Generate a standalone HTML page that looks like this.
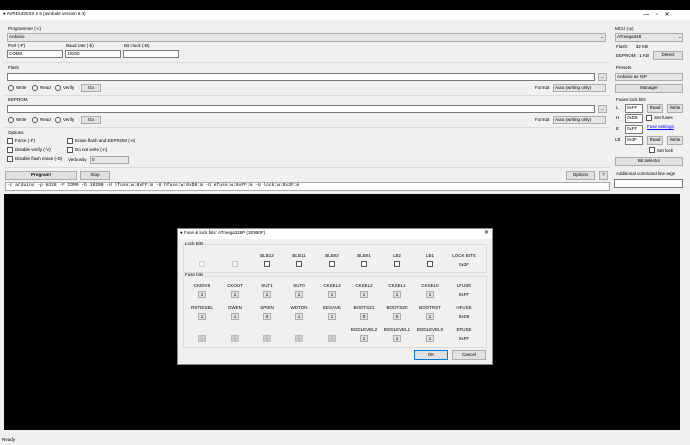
<!DOCTYPE html><html><head><style>
*{margin:0;padding:0;box-sizing:border-box}
body{width:690px;height:445px;background:#000;position:relative;overflow:hidden;font-family:"Liberation Sans",sans-serif;font-size:4.5px;color:#000}
.a{position:absolute;white-space:nowrap;line-height:1}
.tb{position:absolute;background:#fff;border:1px solid #7a7a7a}
.cb{position:absolute;background:#e5e5e5;border:1px solid #acacac}
.bt{position:absolute;background:#e1e1e1;border:1px solid #adadad;text-align:center;line-height:6px;font-size:4.5px}
.ck{position:absolute;width:6px;height:6px;background:#fff;border:1px solid #555}
.rd{position:absolute;width:6px;height:6px;border-radius:50%;background:#fff;border:1px solid #555}
.gl{position:absolute;border-top:1px solid #dcdcdc}
.fb{position:absolute;width:8px;height:7px;border:1px solid #adadad;background:#e1e1e1;text-align:center;font-size:4.5px;line-height:5px}
.dis{color:#aaa;background:#ccc;border-color:#bfbfbf}
.c{text-align:center;width:30px;margin-left:-15px}
</style></head><body>
<div class="a" style="left:0;top:10px;width:690px;height:10px;background:#fff"></div>
<div class="a" style="left:3px;top:12px">● AVRDUDESS 2.6 (avrdude version 6.3)</div>
<div class="a" style="left:643px;top:12px;font-size:6px">—&nbsp;&nbsp;&nbsp;&nbsp;▫&nbsp;&nbsp;&nbsp;&nbsp;✕</div>
<div class="a" style="left:0;top:20px;width:690px;height:174px;background:#f0f0f0"></div>
<div class="a" style="left:0;top:194px;width:4px;height:243px;background:#f0f0f0"></div>
<div class="a" style="left:680px;top:194px;width:10px;height:243px;background:#f0f0f0"></div>
<div class="a" style="left:0;top:430px;width:690px;height:15px;background:#f0f0f0"></div>
<div class="a" style="left:2px;top:438px">Ready</div>

<div class="a" style="left:8px;top:27px">Programmer (-c)</div>
<div class="cb" style="left:7px;top:33px;width:599px;height:9px"></div>
<div class="a" style="left:9px;top:35px">Arduino</div><div class="a" style="left:600px;top:35px">⌄</div>
<div class="a" style="left:8px;top:44px">Port (-P)</div><div class="a" style="left:66px;top:44px">Baud rate (-b)</div><div class="a" style="left:124px;top:44px">Bit clock (-B)</div>
<div class="tb" style="left:7px;top:50px;width:56px;height:8px"></div><div class="a" style="left:9px;top:52px">COM9</div>
<div class="tb" style="left:65px;top:50px;width:56px;height:8px"></div><div class="a" style="left:67px;top:52px">19200</div>
<div class="tb" style="left:123px;top:50px;width:56px;height:8px"></div>
<div class="gl" style="left:5px;top:62px;width:605px"></div>
<div class="a" style="left:8px;top:66px">Flash</div>
<div class="tb" style="left:7px;top:73px;width:588px;height:8px"></div>
<div class="bt" style="left:598px;top:73px;width:9px;height:8px">...</div>
<div class="rd" style="left:8px;top:85px"></div><div class="a" style="left:16px;top:86px">Write</div>
<div class="rd" style="left:32px;top:85px"></div><div class="a" style="left:40px;top:86px">Read</div>
<div class="rd" style="left:55px;top:85px"></div><div class="a" style="left:63px;top:86px">Verify</div>
<div class="bt" style="left:81px;top:84px;width:20px;height:8px">Go</div>
<div class="a" style="left:535px;top:86px">Format</div>
<div class="cb" style="left:553px;top:84px;width:53px;height:8px"></div><div class="a" style="left:555px;top:86px">Auto (writing only)</div>
<div class="gl" style="left:5px;top:95px;width:605px"></div>
<div class="a" style="left:8px;top:98px">EEPROM</div>
<div class="tb" style="left:7px;top:105px;width:588px;height:8px"></div>
<div class="bt" style="left:598px;top:105px;width:9px;height:8px">...</div>
<div class="rd" style="left:8px;top:117px"></div><div class="a" style="left:16px;top:118px">Write</div>
<div class="rd" style="left:32px;top:117px"></div><div class="a" style="left:40px;top:118px">Read</div>
<div class="rd" style="left:55px;top:117px"></div><div class="a" style="left:63px;top:118px">Verify</div>
<div class="bt" style="left:81px;top:116px;width:20px;height:8px">Go</div>
<div class="a" style="left:535px;top:118px">Format</div>
<div class="cb" style="left:553px;top:116px;width:53px;height:8px"></div><div class="a" style="left:555px;top:118px">Auto (writing only)</div>
<div class="gl" style="left:5px;top:127px;width:605px"></div>
<div class="a" style="left:8px;top:131px">Options</div>
<div class="ck" style="left:7px;top:138px"></div><div class="a" style="left:15px;top:139px">Force (-F)</div>
<div class="ck" style="left:7px;top:147px"></div><div class="a" style="left:15px;top:148px">Disable verify (-V)</div>
<div class="ck" style="left:7px;top:156px"></div><div class="a" style="left:15px;top:157px">Disable flash erase (-D)</div>
<div class="ck" style="left:67px;top:138px"></div><div class="a" style="left:75px;top:139px">Erase flash and EEPROM (-e)</div>
<div class="ck" style="left:67px;top:147px"></div><div class="a" style="left:75px;top:148px">Do not write (-n)</div>
<div class="a" style="left:68px;top:158px">Verbosity</div>
<div class="cb" style="left:90px;top:156px;width:39px;height:8px"></div><div class="a" style="left:92px;top:158px">0</div>
<div class="gl" style="left:5px;top:167px;width:605px"></div>
<div class="bt" style="left:5px;top:171px;width:72px;height:9px;font-weight:bold">Program!</div>
<div class="bt" style="left:80px;top:171px;width:30px;height:9px">Stop</div>
<div class="bt" style="left:566px;top:171px;width:29px;height:9px">Options</div>
<div class="bt" style="left:599px;top:171px;width:9px;height:9px">?</div>
<div class="tb" style="left:5px;top:182px;width:605px;height:9px;border-color:#aaa"></div>
<div class="a" style="left:7px;top:184px;font-family:'Liberation Mono',monospace;font-size:4.6px">-c arduino -p m328 -F COM9 -b 19200 -U lfuse:w:0xFF:m -U hfuse:w:0xD9:m -U efuse:w:0xFF:m -U lock:w:0x3F:m</div>

<div class="a" style="left:615px;top:27px">MCU (-p)</div>
<div class="cb" style="left:615px;top:33px;width:68px;height:9px"></div><div class="a" style="left:617px;top:35px">ATmega328</div><div class="a" style="left:678px;top:35px">⌄</div>
<div class="a" style="left:616px;top:45px">Flash:&nbsp;&nbsp;&nbsp;&nbsp;&nbsp;&nbsp;32 KB</div>
<div class="a" style="left:616px;top:54px">EEPROM:&nbsp;&nbsp;1 KB</div>
<div class="bt" style="left:653px;top:51px;width:30px;height:9px">Detect</div>
<div class="a" style="left:616px;top:66px">Presets</div>
<div class="cb" style="left:615px;top:73px;width:68px;height:8px"></div><div class="a" style="left:617px;top:75px">Arduino as ISP</div>
<div class="bt" style="left:615px;top:84px;width:68px;height:9px">Manager</div>
<div class="a" style="left:616px;top:98px">Fuses  lock bits</div>
<div class="a" style="left:616px;top:106px">L</div><div class="tb" style="left:625px;top:104px;width:18px;height:9px"></div><div class="a" style="left:627px;top:106px">0xFF</div>
<div class="bt" style="left:647px;top:104px;width:16px;height:9px">Read</div><div class="bt" style="left:667px;top:104px;width:16px;height:9px">Write</div>
<div class="a" style="left:616px;top:116px">H</div><div class="tb" style="left:625px;top:114px;width:18px;height:9px"></div><div class="a" style="left:627px;top:116px">0xD9</div>
<div class="ck" style="left:646px;top:115px"></div><div class="a" style="left:654px;top:116px">Set fuses</div>
<div class="a" style="left:616px;top:127px">E</div><div class="tb" style="left:625px;top:125px;width:18px;height:9px"></div><div class="a" style="left:627px;top:127px">0xFF</div>
<div class="a" style="left:647px;top:125px;color:#00f;text-decoration:underline">Fuse settings</div>
<div class="a" style="left:615px;top:138px">LB</div><div class="tb" style="left:625px;top:136px;width:18px;height:9px"></div><div class="a" style="left:627px;top:138px">0x3F</div>
<div class="bt" style="left:647px;top:136px;width:16px;height:9px">Read</div><div class="bt" style="left:667px;top:136px;width:16px;height:9px">Write</div>
<div class="ck" style="left:649px;top:147px"></div><div class="a" style="left:657px;top:149px">Set lock</div>
<div class="bt" style="left:615px;top:157px;width:68px;height:9px">Bit selector</div>
<div class="a" style="left:616px;top:172px">Additional command line args</div>
<div class="tb" style="left:614px;top:179px;width:69px;height:9px"></div>

<div class="a" style="left:177px;top:228px;width:316px;height:137px;background:#f0f0f0;border:1px solid #888"></div>
<div class="a" style="left:178px;top:229px;width:314px;height:10px;background:#fff"></div>
<div class="a" style="left:180px;top:231px">● Fuse &amp; lock bits: ATmega328P (1E950F)</div>
<div class="a" style="left:484px;top:230px;font-size:6px">✕</div>
<div class="a" style="left:183px;top:244px;width:304px;height:29px;border:1px solid #dcdcdc"></div>
<div class="a" style="left:185px;top:242px;background:#f0f0f0">Lock Bits</div>
<div class="a" style="left:183px;top:276px;width:304px;height:72px;border:1px solid #dcdcdc"></div>
<div class="a" style="left:185px;top:273px;background:#f0f0f0">Fuse bits</div>
<div class="ck" style="left:199px;top:261px;border-color:#ccc;background:#f4f4f4"></div>
<div class="ck" style="left:232px;top:261px;border-color:#ccc;background:#f4f4f4"></div>
<div class="a c" style="left:267px;top:254px">BLB12</div><div class="ck" style="left:264px;top:261px"></div>
<div class="a c" style="left:299px;top:254px">BLB11</div><div class="ck" style="left:296px;top:261px"></div>
<div class="a c" style="left:332px;top:254px">BLB02</div><div class="ck" style="left:329px;top:261px"></div>
<div class="a c" style="left:364px;top:254px">BLB01</div><div class="ck" style="left:361px;top:261px"></div>
<div class="a c" style="left:397px;top:254px">LB2</div><div class="ck" style="left:394px;top:261px"></div>
<div class="a c" style="left:430px;top:254px">LB1</div><div class="ck" style="left:427px;top:261px"></div>
<div class="a c" style="left:464px;top:254px">LOCK BITS</div><div class="a c" style="left:464px;top:263px">0x3F</div>

<div class="a c" style="left:202px;top:284px">CKDIV8</div><div class="fb" style="left:198px;top:291px">1</div>
<div class="a c" style="left:235px;top:284px">CKOUT</div><div class="fb" style="left:231px;top:291px">1</div>
<div class="a c" style="left:267px;top:284px">SUT1</div><div class="fb" style="left:263px;top:291px">1</div>
<div class="a c" style="left:299px;top:284px">SUT0</div><div class="fb" style="left:295px;top:291px">1</div>
<div class="a c" style="left:332px;top:284px">CKSEL3</div><div class="fb" style="left:328px;top:291px">1</div>
<div class="a c" style="left:364px;top:284px">CKSEL2</div><div class="fb" style="left:360px;top:291px">1</div>
<div class="a c" style="left:397px;top:284px">CKSEL1</div><div class="fb" style="left:393px;top:291px">1</div>
<div class="a c" style="left:430px;top:284px">CKSEL0</div><div class="fb" style="left:426px;top:291px">1</div>
<div class="a c" style="left:464px;top:284px">LFUSE</div><div class="a c" style="left:464px;top:293px">0xFF</div>

<div class="a c" style="left:202px;top:306px">RSTDISBL</div><div class="fb" style="left:198px;top:313px">1</div>
<div class="a c" style="left:235px;top:306px">DWEN</div><div class="fb" style="left:231px;top:313px">1</div>
<div class="a c" style="left:267px;top:306px">SPIEN</div><div class="fb" style="left:263px;top:313px">0</div>
<div class="a c" style="left:299px;top:306px">WDTON</div><div class="fb" style="left:295px;top:313px">1</div>
<div class="a c" style="left:332px;top:306px">EESAVE</div><div class="fb" style="left:328px;top:313px">1</div>
<div class="a c" style="left:364px;top:306px">BOOTSZ1</div><div class="fb" style="left:360px;top:313px">0</div>
<div class="a c" style="left:397px;top:306px">BOOTSZ0</div><div class="fb" style="left:393px;top:313px">0</div>
<div class="a c" style="left:430px;top:306px">BOOTRST</div><div class="fb" style="left:426px;top:313px">1</div>
<div class="a c" style="left:464px;top:306px">HFUSE</div><div class="a c" style="left:464px;top:315px">0xD9</div>

<div class="fb dis" style="left:198px;top:335px">1</div>
<div class="fb dis" style="left:231px;top:335px">1</div>
<div class="fb dis" style="left:263px;top:335px">1</div>
<div class="fb dis" style="left:295px;top:335px">1</div>
<div class="fb dis" style="left:328px;top:335px">1</div>
<div class="a c" style="left:364px;top:328px">BODLEVEL2</div><div class="fb" style="left:360px;top:335px">1</div>
<div class="a c" style="left:397px;top:328px">BODLEVEL1</div><div class="fb" style="left:393px;top:335px">1</div>
<div class="a c" style="left:430px;top:328px">BODLEVEL0</div><div class="fb" style="left:426px;top:335px">1</div>
<div class="a c" style="left:464px;top:328px">EFUSE</div><div class="a c" style="left:464px;top:337px">0xFF</div>
<div class="bt" style="left:414px;top:350px;width:34px;height:10px;border-color:#0078d7;line-height:8px">OK</div>
<div class="bt" style="left:452px;top:350px;width:34px;height:10px;line-height:8px">Cancel</div>
</body></html>
